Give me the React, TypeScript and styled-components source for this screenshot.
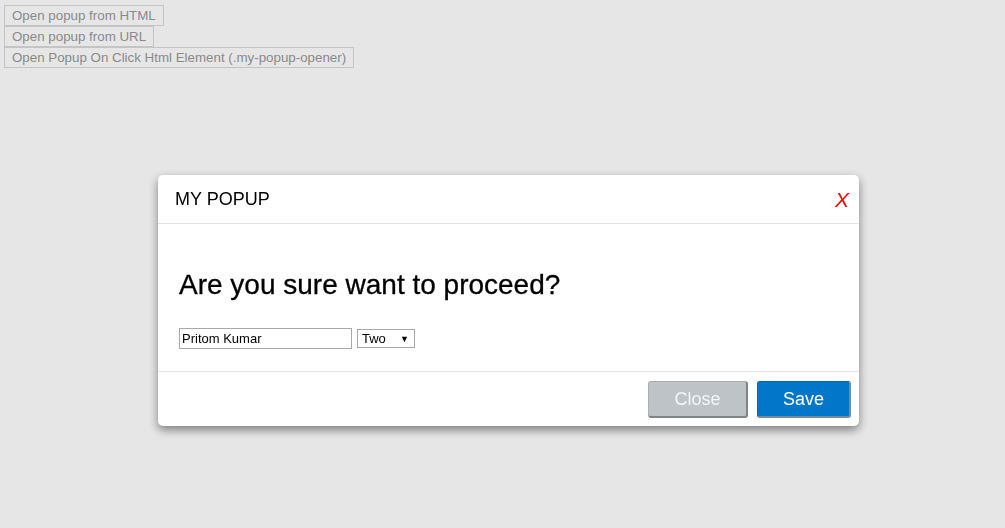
import React, { useState } from 'react';
import styled, { createGlobalStyle } from 'styled-components';

const GlobalStyle = createGlobalStyle`
  html, body {
    margin: 0;
    padding: 0;
    background-color: #e6e6e6;
    font-family: "Liberation Sans", Arial, sans-serif;
  }
  body {
    padding: 5px 4px;
  }
`;

const OpenerList = styled.div`
  display: flex;
  flex-direction: column;
  align-items: flex-start;
`;

const OpenerButton = styled.button`
  font-family: "Liberation Sans", Arial, sans-serif;
  font-size: 13.333px;
  line-height: 17px;
  color: #8a8a8a;
  background-color: #e6e6e6;
  border: 1px solid #c4c4c4;
  padding: 1px 7px;
  margin: 0;
  cursor: pointer;
`;

const Overlay = styled.div`
  position: fixed;
  inset: 0;
  padding: 175px 0 0 158px;
  pointer-events: none;
`;

const Popup = styled.div`
  width: 701px;
  background-color: #fff;
  border-radius: 5px;
  box-shadow: 0 4px 10px rgba(0, 0, 0, 0.45);
  pointer-events: auto;
`;

const PopupHeader = styled.div`
  display: flex;
  align-items: center;
  justify-content: space-between;
  height: 48px;
  padding: 0 10px 0 17px;
  border-bottom: 1px solid #e3e3e3;
`;

const PopupTitle = styled.h3`
  margin: 0;
  font-size: 18px;
  font-weight: normal;
  color: #000;
`;

const CloseX = styled.span`
  font-size: 21px;
  font-style: italic;
  color: #ff0000;
  cursor: pointer;
  line-height: 1;
`;

const PopupBody = styled.div`
  height: 148px;
  padding: 0 21px;
  box-sizing: border-box;
  border-bottom: 1px solid #e3e3e3;
  display: flex;
  flex-direction: column;
`;

const Question = styled.h2`
  margin: 45px 0 0;
  font-size: 28px;
  font-weight: normal;
  color: #000;
  line-height: 32px;
  -webkit-text-stroke: 0.3px #000;
`;

const FieldRow = styled.div`
  display: flex;
  align-items: center;
  gap: 5px;
  margin-top: 27px;
`;

const NameInput = styled.input`
  width: 173px;
  height: 21px;
  box-sizing: border-box;
  border: 1px solid #a9a9a9;
  padding: 0 2px;
  font-family: "Liberation Sans", Arial, sans-serif;
  font-size: 13px;
  color: #000;
`;

const Select = styled.div`
  width: 58px;
  height: 19px;
  box-sizing: border-box;
  border: 1px solid #a9a9a9;
  display: flex;
  align-items: center;
  justify-content: space-between;
  padding: 0 5px 0 4px;
  font-size: 13px;
  color: #000;
  background: #fff;

  span:last-child {
    font-size: 9px;
  }
`;

const PopupFooter = styled.div`
  display: flex;
  justify-content: flex-end;
  gap: 9px;
  padding: 9px 8px 8px;
`;

const FooterButton = styled.button<{ primary?: boolean }>`
  height: 37px;
  box-sizing: border-box;
  padding: 0;
  width: ${p => (p.primary ? '94px' : '100px')};
  font-family: "Liberation Sans", Arial, sans-serif;
  font-size: 18px;
  color: ${p => (p.primary ? '#fff' : '#f4f6f7')};
  background-color: ${p => (p.primary ? '#0277c9' : '#bdc3c7')};
  border: 1px solid ${p => (p.primary ? '#0468ad' : '#a9aeb1')};
  border-bottom: 2px solid ${p => (p.primary ? '#7a8a96' : '#7f8486')};
  border-right: 2px solid ${p => (p.primary ? '#7a8a96' : '#7f8486')};
  border-radius: 3px;
  cursor: pointer;
`;

const App: React.FC = () => {
  const [name, setName] = useState<string>('Pritom Kumar');

  return (
    <>
      <GlobalStyle />
      <OpenerList>
        <OpenerButton>Open popup from HTML</OpenerButton>
        <OpenerButton>Open popup from URL</OpenerButton>
        <OpenerButton>Open Popup On Click Html Element (.my-popup-opener)</OpenerButton>
      </OpenerList>
      <Overlay>
        <Popup>
          <PopupHeader>
            <PopupTitle>MY POPUP</PopupTitle>
            <CloseX>X</CloseX>
          </PopupHeader>
          <PopupBody>
            <Question>Are you sure want to proceed?</Question>
            <FieldRow>
              <NameInput value={name} onChange={e => setName(e.target.value)} />
              <Select>
                <span>Two</span>
                <span>▼</span>
              </Select>
            </FieldRow>
          </PopupBody>
          <PopupFooter>
            <FooterButton>Close</FooterButton>
            <FooterButton primary>Save</FooterButton>
          </PopupFooter>
        </Popup>
      </Overlay>
    </>
  );
};

export default App;
